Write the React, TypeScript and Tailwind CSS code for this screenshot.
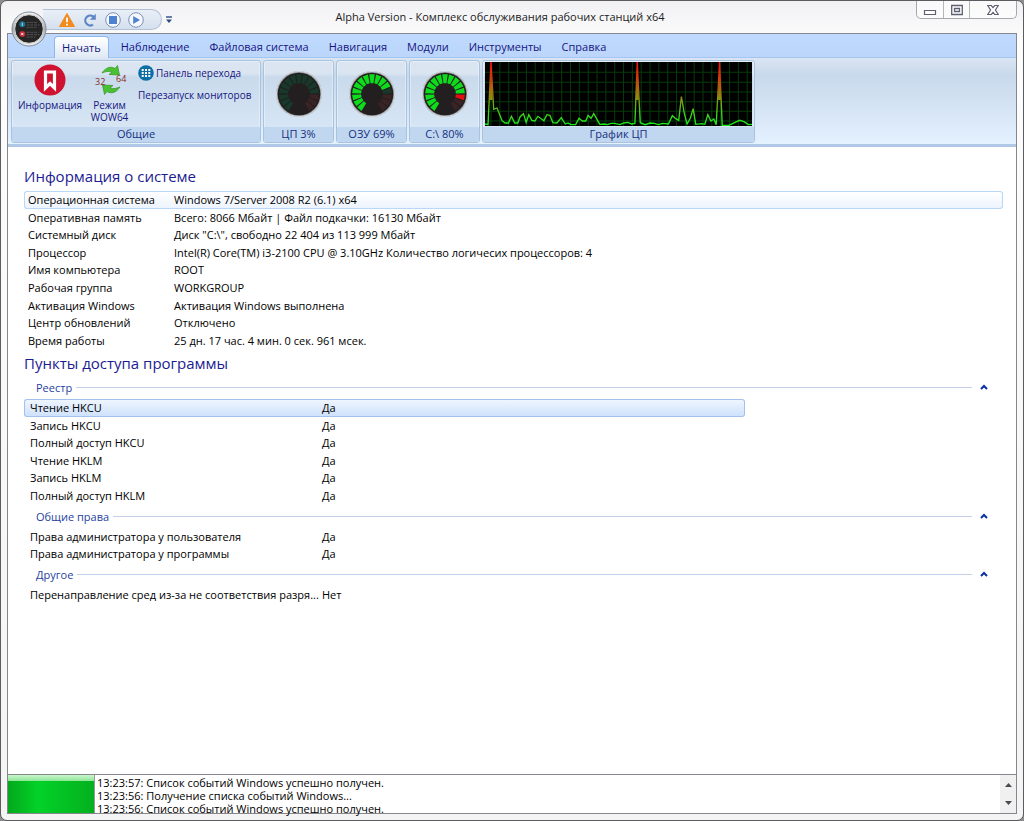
import type { ReactNode } from 'react';

const tabs = ['Начать', 'Наблюдение', 'Файловая система', 'Навигация', 'Модули', 'Инструменты', 'Справка'];

const systemInfo = [
    ['Операционная система', 'Windows 7/Server 2008 R2 (6.1) x64'],
    ['Оперативная память', 'Всего: 8066 Мбайт | Файл подкачки: 16130 Мбайт'],
    ['Системный диск', 'Диск "C:\\", свободно 22 404 из 113 999 Мбайт'],
    ['Процессор', 'Intel(R) Core(TM) i3-2100 CPU @ 3.10GHz Количество логичесих процессоров: 4'],
    ['Имя компьютера', 'ROOT'],
    ['Рабочая группа', 'WORKGROUP'],
    ['Активация Windows', 'Активация Windows выполнена'],
    ['Центр обновлений', 'Отключено'],
    ['Время работы', '25 дн. 17 час. 4 мин. 0 сек. 961 мсек.'],
];

const registry = [
    ['Чтение HKCU', 'Да'],
    ['Запись HKCU', 'Да'],
    ['Полный доступ HKCU', 'Да'],
    ['Чтение HKLM', 'Да'],
    ['Запись HKLM', 'Да'],
    ['Полный доступ HKLM', 'Да'],
];

const rights = [
    ['Права администратора у пользователя', 'Да'],
    ['Права администратора у программы', 'Да'],
];

const other = [['Перенаправление сред из-за не соответствия разря...', 'Нет']];

const log = [
    '13:23:57: Список событий Windows успешно получен.',
    '13:23:56: Получение списка событий Windows...',
    '13:23:56: Список событий Windows успешно получен.',
];

function Orb() {
    return (
        <svg viewBox="0 0 36 36" className="w-9 h-9">
            <defs>
                <linearGradient id="orb" x1="0" y1="0" x2="0" y2="1">
                    <stop offset="0" stopColor="#f4f6f9" />
                    <stop offset="0.5" stopColor="#a9b0ba" />
                    <stop offset="1" stopColor="#eef3f8" />
                </linearGradient>
            </defs>
            <circle cx="18" cy="18" r="17" fill="url(#orb)" stroke="#7f8894" strokeWidth="1" />
            <circle cx="18" cy="18" r="14.3" fill="#262526" stroke="#d9d2c8" strokeWidth="1" />
            <circle cx="11.3" cy="13.3" r="3" fill="#1b7391" />
            <path d="M11.3 11.6v3.4" stroke="#b5dfea" strokeWidth="0.9" />
            <circle cx="11.3" cy="23" r="3" fill="#c62835" />
            <path d="M10.2 21.8l2.2 2.4m0-2.4l-2.2 2.4" stroke="#fff" strokeWidth="0.9" />
            <path d="M15.5 11.6h11M15.5 14h13M15.5 16.3h10M15.5 21.3h12M15.5 23.6h13M15.5 26h9" stroke="#5c5c60" strokeWidth="0.8" strokeDasharray="3 0.8" />
        </svg>
    );
}

function QuickAccess() {
    return (
        <div className="flex items-center h-[21px] w-[119px] pl-4 gap-[7px] rounded-r-full border border-l-0 border-[#b3c1d6] bg-gradient-to-b from-[#e9eff7] to-[#d5e0ee]">
            <button aria-label="Предупреждение">
                <svg viewBox="0 0 16 16" className="w-4 h-4">
                    <path d="M8 1.5L15.5 14.5H.5z" fill="#f28a1c" stroke="#f28a1c" strokeLinejoin="round" />
                    <path d="M8 5.5v4.8M8 11.7v1.7" stroke="#fff" strokeWidth="1.8" />
                </svg>
            </button>
            <button aria-label="Обновить">
                <svg viewBox="0 0 16 16" className="w-4 h-4">
                    <path d="M11 12.7A5 5 0 1 1 12 5.2" fill="none" stroke="#5f86c4" strokeWidth="2.2" />
                    <path d="M13.8 1.800v6H7.800z" fill="#5f86c4" />
                </svg>
            </button>
            <button aria-label="Стоп">
                <svg viewBox="0 0 16 16" className="w-4 h-4">
                    <circle cx="8" cy="8" r="7.3" fill="#f4f8fd" stroke="#7d8fb5" strokeWidth="1" />
                    <path d="M4 4h8v8H4z" fill="#4f82ce" />
                </svg>
            </button>
            <button aria-label="Запуск">
                <svg viewBox="0 0 16 16" className="w-4 h-4">
                    <circle cx="8" cy="8" r="7.3" fill="#f4f8fd" stroke="#7d8fb5" strokeWidth="1" />
                    <path d="M5.2 4L12 8l-6.800 4z" fill="#4f82ce" />
                </svg>
            </button>
        </div>
    );
}

function TitleBar() {
    return (
        <header className="flex items-start justify-between h-8 pl-[42px] pr-[6px]">
            <div className="flex flex-1 items-center gap-1 pt-2">
                <QuickAccess />
                <button aria-label="Настройка панели">
                    <svg viewBox="0 0 6 8" className="w-[6px] h-2">
                        <path d="M0 1h6" stroke="#2c4a7c" strokeWidth="1.4" />
                        <path d="M0 3.500h6L3 7z" fill="#2c4a7c" />
                    </svg>
                </button>
            </div>
            <h1 className="pt-[7px] pr-[60px] text-[11px] leading-[18px] text-[#1c1c1c]">Alpha Version - Комплекс обслуживания рабочих станций x64</h1>
            <div className="flex flex-1 justify-end">
                <div className="flex h-[18px] rounded-b-[5px] border border-t-0 border-[#a6a8ac] bg-white/60 divide-x divide-[#b4b6ba]">
                    <button aria-label="Свернуть" className="w-[27px] flex justify-center items-center">
                        <svg viewBox="0 0 14 12" className="w-[14px] h-3">
                            <path d="M1.500 6.500h11v4h-11z" fill="#fff" stroke="#5e6070" strokeWidth="1.2" />
                        </svg>
                    </button>
                    <button aria-label="Развернуть" className="w-[26px] flex justify-center items-center">
                        <svg viewBox="0 0 12 12" className="w-3 h-3">
                            <path d="M.7 1.500h10.600v9H.7z" fill="#fff" stroke="#5e6070" strokeWidth="1.3" />
                            <path d="M3.500 4.500h5v3h-5z" fill="#fff" stroke="#5e6070" strokeWidth="1.3" />
                        </svg>
                    </button>
                    <button aria-label="Закрыть" className="w-[46px] flex justify-center items-center">
                        <svg viewBox="0 0 12 12" className="w-3 h-3">
                            <path d="M.7 1.500h3.600L6 3.600l1.700-2.100h3.600L8.400 6l2.900 4.500H7.700L6 8.400l-1.700 2.100H.7L3.600 6z" fill="#fff" stroke="#5e6070" strokeWidth="1.2" />
                        </svg>
                    </button>
                </div>
            </div>
        </header>
    );
}

function Group({ title, className = '', children }: { title: string; className?: string; children: ReactNode }) {
    return (
        <section className={`flex flex-col h-[83px] rounded-[3px] border border-[#a9c3df] bg-gradient-to-b from-[#dbe5f2] from-15% via-[#c9daec] via-20% to-[#dbe9f7] shadow-[inset_0_0_0_1px_rgba(255,255,255,0.35)] ${className}`}>
            <div className="flex-1 min-h-0">{children}</div>
            <h2 className="h-[15px] text-center text-[11px] leading-[14px] rounded-b-[3px] bg-[#c1d7f0] text-[#15307f]">{title}</h2>
        </section>
    );
}

const gaugeTicks = Array.from({ length: 15 }, (_, i) => i);

function Gauge({ lit }: { lit: number }) {
    return (
        <svg viewBox="0 0 48 48" className="w-12 h-12 mx-auto mt-[9px]">
            <circle cx="24" cy="24" r="23" fill="#8e9296" />
            <circle cx="24" cy="24" r="22.500" fill="none" stroke="#e6e9ec" strokeWidth="0.8" />
            <circle cx="24" cy="24" r="21.300" fill="#231f20" />
            {gaugeTicks.map((i) => {
                const red = i > 11;
                const fill = i < lit ? (red ? '#e60f0f' : '#0ddb1c') : red ? '#3a2324' : '#17382a';
                return <path key={i} d="M21.200 4.300h5.600l-1.300 8.900h-3z" fill={fill} transform={`rotate(${(i - 7) * 20} 24 24)`} />;
            })}
        </svg>
    );
}

const gridX = Array.from({ length: 30 }, (_, i) => 65 + i * 26.4);
const gridY = [67, 97, 126, 155, 184, 213];

function CpuChart() {
    return (
        <svg viewBox="47 36 798 192" preserveAspectRatio="none" className="block w-full h-16">
            <defs>
                <linearGradient id="load" gradientUnits="userSpaceOnUse" x1="0" y1="36" x2="0" y2="228">
                    <stop offset="0" stopColor="#ff1010" />
                    <stop offset="0.2" stopColor="#d83208" />
                    <stop offset="0.55" stopColor="#8f8a12" />
                    <stop offset="0.8" stopColor="#45cf1c" />
                    <stop offset="1" stopColor="#12f018" />
                </linearGradient>
            </defs>
            <path d="M47 36h798v192H47z" fill="#000" />
            {gridX.map((x) => (
                <path key={x} d={`M${x} 36v192`} stroke="#053b0a" strokeWidth="3" />
            ))}
            {gridY.map((y) => (
                <path key={y} d={`M47 ${y}h798`} stroke="#053b0a" strokeWidth="3" />
            ))}
            <path
                d="M47 222L56 224L65 36L73 178L83 174L98 212L107 219L117 219L126 199L136 219L145 219L152 200L162 191L170 217L178 194L187 211L196 213L205 199L223 212L232 194L241 196L250 218L262 219L275 203L287 222L295 219L304 224L318 224L328 205L338 213L348 213L355 196L364 205L372 191L390 223L403 222L412 224L424 220L435 220L450 224L462 219L475 217L485 222L495 220L502 36L511 218L526 224L540 219L553 220L565 224L578 220L595 222L607 197L617 206L626 211L634 140L642 187L651 222L661 204L669 176L677 223L695 221L704 223L713 194L722 213L731 207L738 224L748 36L756 226L776 226L793 218L808 211L821 215L834 224L845 223"
                fill="none"
                stroke="url(#load)"
                strokeWidth="4"
            />
            <path d="M60 150L65 36L70 150zM497 150L502 36L507 150zM743 150L748 36L753 150z" fill="url(#load)" />
        </svg>
    );
}

function Ribbon() {
    return (
        <div className="text-[11px] text-[#15157f]">
            <nav className="flex items-end h-6 pl-[46px] bg-gradient-to-b from-[#bfdafe] to-[#bbd5fb] border-b border-[#a3c6f0]">
                {tabs.map((tab, i) => (
                    <button
                        key={tab}
                        className={
                            i === 0
                                ? 'h-[22px] -mb-px px-[7px] mr-[2px] rounded-t-[4px] border border-b-0 border-[#8fb8ea] bg-gradient-to-b from-white to-[#dfe9f5] leading-[22px]'
                                : 'h-[22px] -mb-px px-[10px] leading-[22px]'
                        }
                    >
                        {tab}
                    </button>
                ))}
            </nav>
            <div className="flex gap-[2px] pl-[3px] pt-[2px] pb-[1px] border-b-[3px] border-[#b0c8e6] bg-gradient-to-b from-[#dbe5f3] via-[#c8d9eb] via-20% to-[#e4f1ff]">
                <Group title="Общие" className="w-[250px]">
                    <div className="flex pl-[7px] text-[10px]">
                        <button className="flex flex-col items-center w-[62px] pt-[3px] leading-3">
                            <svg viewBox="0 0 32 32" className="w-8 h-8 mb-[3px]">
                                <circle cx="16" cy="16" r="15.500" fill="#ce1230" />
                                <path d="M11.500 8h9v16L16 19.500 11.500 24z" fill="none" stroke="#fff" strokeWidth="3.200" />
                            </svg>
                            Информация
                        </button>
                        <button className="flex flex-col items-center w-[57px] pt-[3px] leading-3">
                            <svg viewBox="0 0 32 32" className="w-8 h-8 mb-[3px] overflow-visible">
                                <path d="M8 9C12 3 17 2 21 4.500L23.500 1.500 25.500 11 15 10.500 18 8C14 6.500 11 8 8 9z" fill="#4cc033" stroke="#2f9422" strokeWidth="0.7" />
                                <path d="M26 23C22 29 17 30 13 27.500L10.500 30.500 8.500 21 19 21.500 16 24C20 25.500 23 24 26 23z" fill="#4cc033" stroke="#2f9422" strokeWidth="0.7" />
                                <text x="1" y="21" fontSize="9" fill="#8d2a20">32</text>
                                <text x="22" y="18" fontSize="9" fill="#8d2a20">64</text>
                            </svg>
                            <span className="text-center">
                                Режим
                                <br />
                                WOW64
                            </span>
                        </button>
                        <div className="flex flex-col items-start pt-[3px] whitespace-nowrap">
                            <button className="flex items-center gap-[2px] h-[18px]">
                                <svg viewBox="0 0 16 16" className="w-4 h-4">
                                    <circle cx="8" cy="8" r="7.800" fill="#0b6ea5" />
                                    <path d="M3.700 4h2v2h-2zM7 4h2v2H7zM10.300 4h2v2h-2zM3.700 7h2v2h-2zM7 7h2v2H7zM10.300 7h2v2h-2zM3.700 10h2v2h-2zM7 10h2v2H7zM10.300 10h2v2h-2z" fill="#fff" />
                                </svg>
                                Панель перехода
                            </button>
                            <button className="h-[26px]">Перезапуск мониторов</button>
                        </div>
                    </div>
                </Group>
                <Group title="ЦП 3%" className="w-[71px]">
                    <Gauge lit={0} />
                </Group>
                <Group title="ОЗУ 69%" className="w-[71px]">
                    <Gauge lit={11} />
                </Group>
                <Group title="C:\ 80%" className="w-[71px]">
                    <Gauge lit={13} />
                </Group>
                <Group title="График ЦП" className="w-[273px]">
                    <div className="px-[2px] pt-px">
                        <CpuChart />
                    </div>
                </Group>
            </div>
        </div>
    );
}

function AccessGroup({ title, rows, selected, className }: { title: string; rows: string[][]; selected?: number; className: string }) {
    return (
        <section>
            <div className="flex items-center h-[22px] pl-3 pr-[15px]">
                <h3 className="text-[#1f3f9f]">{title}</h3>
                <div className="flex-1 h-px ml-1 mr-[8px] bg-[#c3d0ea]" />
                <button aria-label={`Свернуть ${title}`} className="w-2">
                    <svg viewBox="0 0 8 6" className="w-2 h-[6px]">
                        <path d="M1 5l3-3 3 3" fill="none" stroke="#0a2fa0" strokeWidth="2" />
                    </svg>
                </button>
            </div>
            <table className={`mt-px mb-px w-[721px] max-w-full table-fixed border-separate border-spacing-0 whitespace-nowrap ${className}`}>
                <tbody>
                    {rows.map(([name, value], i) => (
                        <tr key={name}>
                            <td className={`w-[292px] pl-[5px] py-0 border border-r-0 ${i === selected ? 'rounded-l-[3px] border-[#a3c1ea] bg-gradient-to-b from-[#eef5fe] to-[#cfe2fc]' : 'border-transparent'}`}>{name}</td>
                            <td className={`pl-[6px] py-0 border border-l-0 ${i === selected ? 'rounded-r-[3px] border-[#a3c1ea] bg-gradient-to-b from-[#eef5fe] to-[#cfe2fc]' : 'border-transparent'}`}>{value}</td>
                        </tr>
                    ))}
                </tbody>
            </table>
        </section>
    );
}

export default function App() {
    return (
        <div className="bg-[#8d8d8f] font-['Open_Sans','Noto_Sans',sans-serif] text-[11px] leading-[15px] text-black">
            <div className="relative flex flex-col min-h-screen rounded-[7px] border border-[#5c5b5e] bg-gradient-to-b from-[#f1f1f4] via-[#fdfdfd] via-5% to-[#f4f4f5]">
                <TitleBar />
                <div className="absolute left-[10px] top-[10px]">
                    <Orb />
                </div>
                <div className="flex flex-col flex-1 mx-[6px] mb-[6px] border border-[#86868c] bg-white">
                    <Ribbon />
                    <main className="flex-1 pl-4 pr-[13px] pt-[19px]">
                        <h2 className="text-[15px] leading-5 mb-[5px] text-[#1b1b94]">Информация о системе</h2>
                        <table className="w-full h-[158px] table-fixed border-separate border-spacing-0">
                            <tbody>
                                {systemInfo.map(([name, value], i) => (
                                    <tr key={name}>
                                        <td className={`w-[150px] pl-[3px] py-0 border border-r-0 ${i === 0 ? 'rounded-l-[3px] border-[#b9d7f7] bg-gradient-to-b from-white to-[#edf4fd]' : 'border-transparent'}`}>{name}</td>
                                        <td className={`py-0 border border-l-0 ${i === 0 ? 'rounded-r-[3px] border-[#b9d7f7] bg-gradient-to-b from-white to-[#edf4fd]' : 'border-transparent'}`}>{value}</td>
                                    </tr>
                                ))}
                            </tbody>
                        </table>
                        <h2 className="text-[15px] leading-5 mt-1 mb-[3px] text-[#1b1b94]">Пункты доступа программы</h2>
                        <AccessGroup title="Реестр" rows={registry} selected={0} className="h-[105px]" />
                        <AccessGroup title="Общие права" rows={rights} className="h-[34px]" />
                        <AccessGroup title="Другое" rows={other} className="h-[17px]" />
                    </main>
                    <footer className="flex h-[39px] border-t border-[#86868c]">
                        <div role="progressbar" aria-label="Выполнение" className="w-[87px] border-r border-[#9a9a9a] bg-gradient-to-r from-[#04a81c] via-[#02d228] via-35% to-[#04b01e]">
                            <div className="h-[6px] bg-gradient-to-b from-[#c9f6cd] to-[#8be696]" />
                        </div>
                        <ul className="flex-1 pl-[2px] pt-px leading-[13px]">
                            {log.map((line, i) => (
                                <li key={i}>{line}</li>
                            ))}
                        </ul>
                        <div className="flex flex-col justify-between items-center w-4 py-2 bg-[#f0f0f1]">
                            <button aria-label="Прокрутить вверх">
                                <svg viewBox="0 0 7 4" className="block w-[7px] h-1">
                                    <path d="M0 4L3.500 0 7 4z" fill="#4a4a4e" />
                                </svg>
                            </button>
                            <button aria-label="Прокрутить вниз">
                                <svg viewBox="0 0 7 4" className="block w-[7px] h-1">
                                    <path d="M0 0h7L3.500 4z" fill="#4a4a4e" />
                                </svg>
                            </button>
                        </div>
                    </footer>
                </div>
            </div>
        </div>
    );
}
